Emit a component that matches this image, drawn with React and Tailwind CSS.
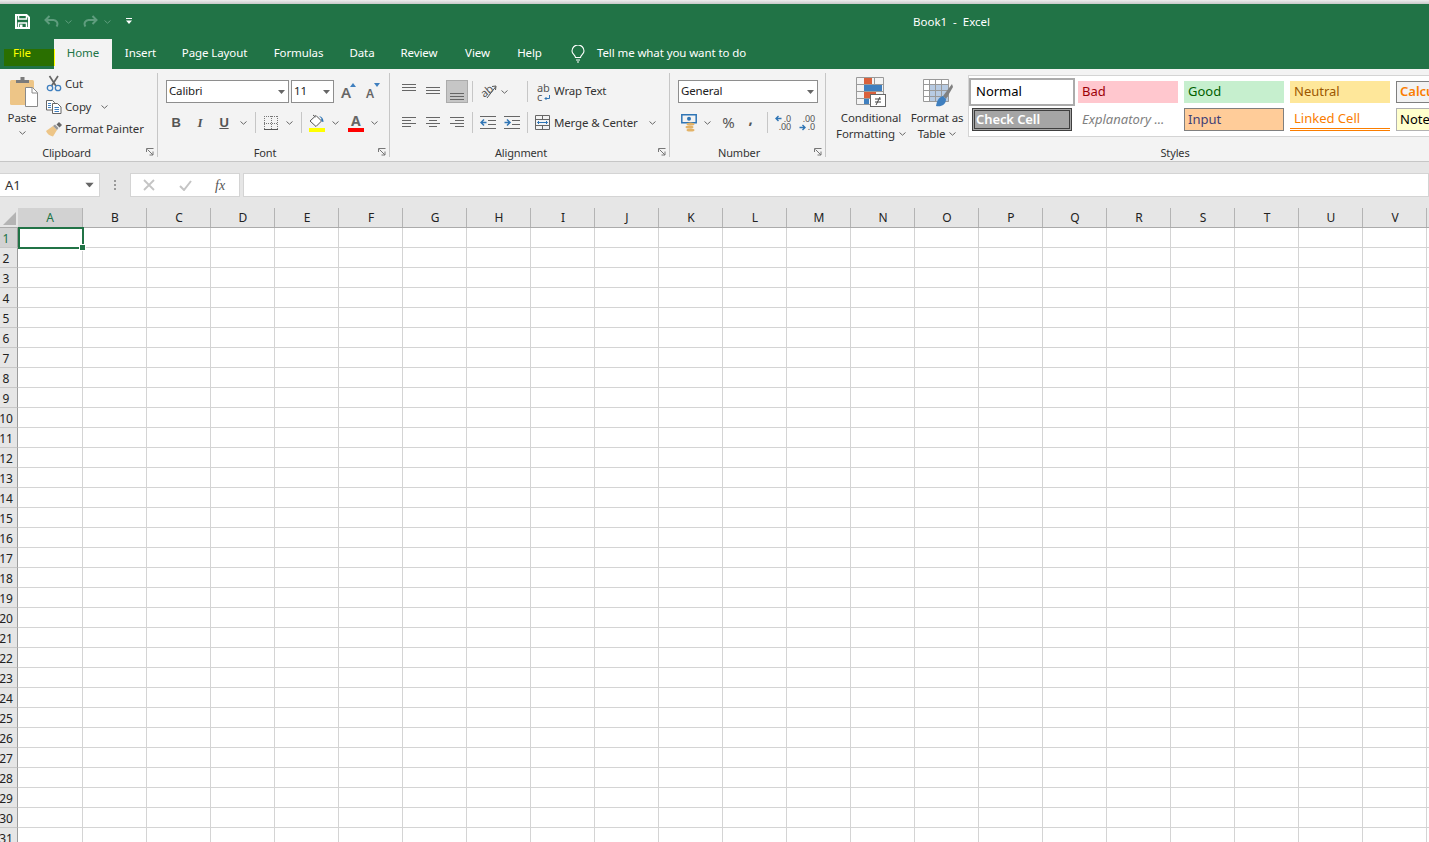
const COLS = "ABCDEFGHIJKLMNOPQRSTUVW".split("");
const ROWS = Array.from({ length: 31 }, (_, i) => i + 1);

const Chev = ({ c = "#666", className = "" }) => (
  <svg width="7" height="4" viewBox="0 0 7 4" className={"shrink-0 " + className}><path d="M.5.5 3.5 3.2 6.5.5" fill="none" stroke={c} /></svg>
);
const Tri = ({ className = "" }) => (
  <svg width="7" height="4" viewBox="0 0 7 4" className={"shrink-0 " + className}><path d="M0 0h7L3.5 4z" fill="#666" /></svg>
);
const Sep = ({ className = "" }) => <div className={"w-px h-[21px] bg-[#c6c6c6] shrink-0 " + className} />;
const GroupSep = () => <div className="w-px h-[84px] mt-[4px] bg-[#c6c6c6] shrink-0" />;
const Launcher = () => (
  <svg width="8" height="8" viewBox="0 0 8 8" className="shrink-0 mr-[3px] mt-[3px]">
    <path d="M.5 4V.5H7.5M1.5 1.5 7 7M7 3.5V7H3.5" fill="none" stroke="#777" />
  </svg>
);
const Lines = ({ rows, color = "#666", className = "" }) => (
  <svg width="14" height="11" viewBox="0 0 14 11" className={"shrink-0 " + className}>
    {rows.map(([a, b, y], i) => <path key={i} d={`M${a} ${y}.5H${b}`} stroke={color} />)}
  </svg>
);
const Combo = ({ w, text, className = "", tri = "mr-[3px]" }) => (
  <div className={"h-[23px] bg-white border border-[#8e8e8e] flex items-center justify-between pl-[2px] shrink-0 text-[11.5px] text-[#222] " + w + " " + className}>
    <span className="-mt-[1px]">{text}</span>
    <Tri className={tri} />
  </div>
);
const Group = ({ w, label, pad, launcher = true, children }) => (
  <div className={"flex flex-col shrink-0 " + w}>
    <div className="h-[76px]">{children}</div>
    <div className="h-[16px] flex">
      <div className={"flex-1 text-center text-[11px] leading-[16px] text-[#333] " + pad}>{label}</div>
      {launcher && <Launcher />}
    </div>
  </div>
);

const Save = () => (
  <svg width="15" height="15" viewBox="0 0 15 15" className="shrink-0">
    <path d="M1 1h10.500L14 3.500V14H1z" fill="none" stroke="#fff" strokeWidth="2" />
    <path d="M3.500 1.500v3.500h8V1.500" fill="none" stroke="#fff" strokeWidth="1.500" />
    <path d="M3.500 14V9h8v5" fill="none" stroke="#fff" strokeWidth="1.500" />
    <rect x="5" y="10.500" width="2.500" height="3" fill="#fff" />
  </svg>
);
const Undo = ({ flip }) => (
  <svg width="15" height="13" viewBox="0 0 15 13" className={"shrink-0 " + (flip ? "-scale-x-100" : "")}>
    <path d="M5.500 1 1.500 5l4 4M1.500 5H9a4 4 0 0 1 3.500 6.500" fill="none" stroke="#5f9d7e" strokeWidth="2" />
  </svg>
);
const Bulb = () => (
  <svg width="14" height="18" viewBox="0 0 14 18" className="shrink-0">
    <path d="M4.500 12.500C4.500 10 1 9 1 6a6 6 0 0 1 12 0c0 3-3.500 4-3.500 6.500z M5 15h4M6 17h2" fill="none" stroke="#fff" strokeWidth="1.100" />
  </svg>
);
const PasteIcon = () => (
  <svg width="28" height="30" viewBox="0 0 28 30">
    <rect x="0" y="3" width="24" height="25" rx="1.500" fill="#edc587" />
    <path d="M6 5V3h4.500V0h4v3H19v3H6z" fill="#7b7b7b" />
    <path d="M15.500 10.500h7l5 5v14h-12z" fill="#fff" stroke="#8a8a8a" />
    <path d="M22 10.500v5.500h5.500" fill="none" stroke="#8a8a8a" />
  </svg>
);
const Scissors = () => (
  <svg width="16" height="17" viewBox="0 0 16 17">
    <path d="M3.500 1 10 11M12 1 5.500 11" stroke="#666" strokeWidth="1.700" fill="none" />
    <circle cx="4" cy="13" r="2.700" fill="none" stroke="#3f7fbf" strokeWidth="1.300" />
    <circle cx="12" cy="13" r="2.700" fill="none" stroke="#3f7fbf" strokeWidth="1.300" />
  </svg>
);
const CopyIcon = () => (
  <svg width="16" height="14" viewBox="0 0 16 14">
    <path d="M.5.500h6l2 2V10H.500z" fill="#fff" stroke="#666" />
    <path d="M6.500 3.500h5l3.500 3.500v6.500H6.500z" fill="#fff" stroke="#666" />
    <path d="M2 3.500h3M2 5.500h3M2 7.500h3" stroke="#3f7fbf" />
    <path d="M8.500 7.500h4.500M8.500 9.500h4.500M8.500 11.500h4.500" stroke="#3f7fbf" />
  </svg>
);
const Painter = () => (
  <svg width="16" height="15" viewBox="0 0 16 15">
    <path d="M0 9 7 4l4 4-4 6.500C4 14 1 12 0 9z" fill="#edc587" />
    <path d="M7 4l2-1.500 3.500 3.500L11 8z" fill="#999" />
    <path d="M10.500 2.500 13 0l3 3-2.500 2.500z" fill="#666" />
  </svg>
);
const GrowA = ({ up }) => (
  <div className="relative w-[15px] h-[17px] shrink-0">
    <span className={"absolute left-0 bottom-0 leading-none font-semibold text-[#666] " + (up ? "text-[15px]" : "text-[12px] left-[1px]")}>A</span>
    <svg width="6" height="4" viewBox="0 0 6 4" className="absolute right-0 top-0">
      {up ? <path d="M3 0l3 4H0z" fill="#3f7fbf" /> : <path d="M0 0h6L3 4z" fill="#3f7fbf" />}
    </svg>
  </div>
);
const Borders = () => (
  <svg width="14" height="14" viewBox="0 0 14 14" className="shrink-0">
    <path d="M0 .5h14M0 7.500h14M.5 0v14M7.500 0v14M13.500 0v14" fill="none" stroke="#777" strokeDasharray="1 1" />
    <path d="M0 13.500h14" stroke="#555" />
  </svg>
);
const Fill = () => (
  <svg width="16" height="18" viewBox="0 0 16 18" className="shrink-0">
    <path d="M1 7 7 1.500 12.500 7 7 12.500z" fill="#fff" stroke="#555" />
    <path d="M4 1 6.500 3" stroke="#555" />
    <path d="M10 2c3 .5 4.500 3 4.500 6-1.500 0-3-2-2-3.500z" fill="#2f75b5" />
    <rect x="0" y="14" width="16" height="4" fill="#ffff00" />
  </svg>
);
const FontColor = () => (
  <div className="relative w-[16px] h-[18px] shrink-0">
    <span className="absolute left-[3px] top-0 text-[14px] leading-none font-bold text-[#666]">A</span>
    <div className="absolute left-0 bottom-0 w-[16px] h-[4px] bg-[#ff0000]" />
  </div>
);
const Orient = () => (
  <div className="relative w-[17px] h-[15px] shrink-0">
    <span className="absolute left-0 top-[1px] text-[11px] leading-none text-[#555] -rotate-[40deg]">ab</span>
    <svg width="17" height="15" viewBox="0 0 17 15" className="absolute left-0 top-0">
      <path d="M7 14 15.500 3M12 2.500l4-.500-.5 4" fill="none" stroke="#555" />
    </svg>
  </div>
);
const Indent = ({ out }) => (
  <svg width="16" height="13" viewBox="0 0 16 13" className="shrink-0">
    <path d="M0 .5h16M8 4.500h8M8 8.500h8M0 12.500h16" stroke="#666" />
    {out
      ? <path d="M6.500 6.500H1M4 3.500l-3 3 3 3" fill="none" stroke="#2f75b5" strokeWidth="1.500" />
      : <path d="M.5 6.500H6M3 3.500l3 3-3 3" fill="none" stroke="#2f75b5" strokeWidth="1.500" />}
  </svg>
);
const WrapIcon = () => (
  <div className="relative w-[13px] h-[18px] shrink-0 text-[#555] text-[11px] leading-[9px]">
    <span className="absolute left-0 top-0">ab</span>
    <span className="absolute left-0 bottom-0">c</span>
    <svg width="6" height="6" viewBox="0 0 6 6" className="absolute right-0 bottom-0"><path d="M5.500 0v3.500H1M2.500 2 1 3.500 2.500 5" fill="none" stroke="#2f75b5" /></svg>
  </div>
);
const MergeIcon = () => (
  <svg width="15" height="15" viewBox="0 0 15 15" className="shrink-0">
    <path d="M.5.5h14v14H.5zM.5 4.500h14M.5 10.500h14M7.500.5v4M7.500 10.500v4" fill="none" stroke="#666" />
    <path d="M2.500 7.500h10M4 6 2.500 7.500 4 9M11 6l1.500 1.500L11 9" fill="none" stroke="#2f75b5" />
  </svg>
);
const Accounting = () => (
  <svg width="16" height="18" viewBox="0 0 16 18" className="shrink-0">
    <path d="M.8.800h14.400v8H.8z" fill="none" stroke="#2f75b5" strokeWidth="1.500" />
    <circle cx="8" cy="4.800" r="2" fill="#2f75b5" />
    <ellipse cx="9.500" cy="10" rx="4" ry="1.600" fill="#e3b368" />
    <ellipse cx="8.500" cy="13" rx="4" ry="1.600" fill="#e3b368" />
    <ellipse cx="9.500" cy="16" rx="4" ry="1.600" fill="#e3b368" />
  </svg>
);
const Decimal = ({ inc }) => (
  <div className="relative w-[16px] h-[16px] shrink-0 text-[#555] text-[9px] leading-[8px]">
    {inc ? (
      <>
        <svg width="7" height="7" viewBox="0 0 7 7" className="absolute left-0 top-0"><path d="M6.500 3.500H1M3.500 1 1 3.500 3.500 6" fill="none" stroke="#2f75b5" strokeWidth="1.400" /></svg>
        <span className="absolute right-0 top-0">.0</span>
        <span className="absolute right-0 bottom-0">.00</span>
      </>
    ) : (
      <>
        <span className="absolute right-0 top-0">.00</span>
        <svg width="7" height="7" viewBox="0 0 7 7" className="absolute left-0 bottom-0"><path d="M.5 3.500H6M3.500 1 6 3.500 3.500 6" fill="none" stroke="#2f75b5" strokeWidth="1.400" /></svg>
        <span className="absolute right-0 bottom-0">.0</span>
      </>
    )}
  </div>
);
const CondIcon = () => (
  <svg width="30" height="30" viewBox="0 0 30 30">
    <path d="M.5.5h27v27H.5zM9.500.5v27M18.500.5v27M.5 7.500h27M.5 14.500h27M.5 21.500h27" fill="none" stroke="#999" />
    <rect x="8" y="1" width="8" height="6" fill="#d9603b" />
    <rect x="8" y="8" width="18" height="6" fill="#3f7fbf" />
    <rect x="8" y="15" width="12" height="6" fill="#d9603b" />
    <rect x="8" y="22" width="5" height="5" fill="#3f7fbf" />
    <rect x="14.500" y="17.500" width="15" height="12" fill="#fff" stroke="#666" />
    <path d="M19 22h6M19 25h6M24 20l-4 8" stroke="#444" fill="none" />
  </svg>
);
const TableIcon = () => (
  <svg width="30" height="29" viewBox="0 0 30 29">
    <rect x="1" y="1" width="25" height="22" fill="#fff" />
    <rect x="6" y="6" width="20" height="17" fill="#b7cbe3" />
    <path d="M.5.5h25v22H.5zM6.500.5v22M12.500.5v22M18.500.5v22M.5 5.500h25M.5 11.500h25M.5 17.500h25" fill="none" stroke="#999" />
    <path d="M29 5 20 17l3 3 7-12z" fill="#808080" />
    <path d="M20 17c-4 1-6 4-7 10 5 1 10-1 10-7z" fill="#3f7fbf" />
  </svg>
);

const STYLES = [
  ["Normal", "text-black bg-white outline-2 outline-[#ababab] outline-offset-1 pl-[4px] pb-[1px]"],
  ["Bad", "bg-[#ffc7ce] text-[#9c0006] pl-[4px] pb-[1px]"],
  ["Good", "bg-[#c6efce] text-[#006100] pl-[4px] pb-[1px]"],
  ["Neutral", "bg-[#fee79a] text-[#9c5700] pl-[4px] pb-[1px]"],
  ["Calculation", "bg-[#f2f2f2] text-[#fa7d00] font-semibold border border-[#7f7f7f] pl-[3px] pb-[1px]"],
  ["Check Cell", "bg-[#a5a5a5] text-white font-semibold border-[3px] border-double border-[#3f3f3f] pl-[1px] tracking-[-0.1px]"],
  ["Explanatory ...", "italic text-[#7f7f7f] pl-[4px]"],
  ["Input", "bg-[#ffcc99] text-[#3f3f76] border border-[#7f7f7f] pl-[3px]"],
  ["Linked Cell", "text-[#fa7d00] border-b-[3px] border-double border-[#fa7d00] pl-[4px] pt-[1px]"],
  ["Note", "bg-[#ffffcc] text-black border border-[#b2b2b2] pl-[3px]"],
];

const TABS = [
  ["Home", "w-[58px]"], ["Insert", "w-[57px]"], ["Page Layout", "w-[91px]"], ["Formulas", "w-[77px]"],
  ["Data", "w-[50px]"], ["Review", "w-[64px]"], ["View", "w-[53px]"], ["Help", "w-[51px]"],
];

export default function App() {
  return (
    <div className="w-[1429px] h-[842px] overflow-hidden bg-white font-['Noto_Sans',sans-serif] text-[12px]">
      <div className="h-[4px] bg-linear-to-b from-[#eeeeee] to-[#c8c8c8]" />
      {/* Title bar */}
      <div className="h-[35px] bg-[#217346] flex items-center relative text-white">
        <div className="ml-[15px]"><Save /></div>
        <div className="ml-[14px] flex items-center"><Undo /><Chev c="#5f9d7e" className="ml-[6px]" /></div>
        <div className="ml-[11px] flex items-center"><Undo flip /><Chev c="#5f9d7e" className="ml-[6px]" /></div>
        <svg width="7" height="7" viewBox="0 0 7 7" className="ml-[15px]"><path d="M0 0h6v1H0zM0 2.500h6L3 6z" fill="#fff" /></svg>
        <div className="absolute left-[913px] top-[10px] text-[11.5px] leading-[16px] whitespace-pre">Book1  -  Excel</div>
      </div>
      {/* Tabs */}
      <div className="h-[30px] bg-[#217346] flex text-white text-[11.5px] tracking-[-0.1px]">
        <div className="w-[54px] relative">
          <div className="absolute left-[4px] top-[10px] w-[51px] h-[17px] bg-[#2a6f00] border-r border-[#ffff00]" />
          <div className="absolute left-[13px] top-[5px] text-[#ffff00] leading-[18px]">File</div>
        </div>
        {TABS.map(([t, w], i) => (
          <div key={t} className={"h-full flex items-center justify-center pb-[2px] " + w + (i === 0 ? " bg-[#f3f3f3] text-[#217346]" : "")}>{t}</div>
        ))}
        <div className="ml-[16px] flex items-center"><Bulb /></div>
        <div className="ml-[12px] flex items-center pb-[2px]">Tell me what you want to do</div>
      </div>

      {/* Ribbon */}
      <div className="h-[93px] bg-[#f3f3f3] border-b border-[#c6c6c6] flex text-[#333] text-[11.5px] tracking-[-0.15px]">
        <Group w="w-[157px]" label="Clipboard" pad="pr-[13px]">
          <div className="flex">
            <div className="w-[44px] flex flex-col items-center">
              <div className="mt-[8px] ml-[4px]"><PasteIcon /></div>
              <div className="mt-[3px] leading-[16px]">Paste</div>
              <Chev className="mt-[5px]" />
            </div>
            <div className="ml-[2px] pt-[3px] flex flex-col">
              <div className="h-[23px] flex items-center"><div className="w-[16px]"><Scissors /></div><span className="ml-[3px]">Cut</span></div>
              <div className="h-[23px] flex items-center"><div className="w-[16px]"><CopyIcon /></div><span className="ml-[3px]">Copy</span><Chev className="ml-[10px]" /></div>
              <div className="h-[22px] flex items-center"><div className="w-[16px]"><Painter /></div><span className="ml-[3px] whitespace-nowrap">Format Painter</span></div>
            </div>
          </div>
        </Group>
        <GroupSep />
        <Group w="w-[231px]" label="Font" pad="pr-[6px]">
          <div className="pt-[11px] flex flex-col gap-[8px]">
            <div className="flex items-center">
              <Combo w="w-[123px]" text="Calibri" className="ml-[8px]" />
              <Combo w="w-[43px]" text="11" className="ml-[2px]" />
              <div className="ml-[7px]"><GrowA up /></div>
              <div className="ml-[9px]"><GrowA /></div>
            </div>
            <div className="flex items-center h-[23px]">
              <div className="ml-[13px] w-[10px] text-center font-bold text-[13px] text-[#555] font-['Liberation_Sans',sans-serif]">B</div>
              <div className="ml-[14px] w-[10px] text-center italic font-bold text-[13px] text-[#555] font-['Liberation_Serif',serif]">I</div>
              <div className="ml-[14px] w-[10px] text-center font-bold text-[13px] underline text-[#555] font-['Liberation_Sans',sans-serif]">U</div>
              <Chev className="ml-[11px]" />
              <Sep className="ml-[8px]" />
              <div className="ml-[8px]"><Borders /></div>
              <Chev className="ml-[8px]" />
              <Sep className="ml-[8px]" />
              <div className="ml-[7px]"><Fill /></div>
              <Chev className="ml-[7px]" />
              <div className="ml-[9px]"><FontColor /></div>
              <Chev className="ml-[7px]" />
            </div>
          </div>
        </Group>
        <GroupSep />
        <Group w="w-[279px]" label="Alignment" pad="pr-[6px]">
          <div className="pt-[11px] flex flex-col gap-[8px]">
            <div className="flex items-center h-[23px]">
              <Lines className="ml-[12px] -mt-[7px]" rows={[[0,14,1],[0,14,4],[0,14,7]]} />
              <Lines className="ml-[10px] -mt-[1px]" rows={[[0,14,1],[0,14,4],[0,14,7]]} />
              <div className="ml-[6px] w-[22px] h-[23px] bg-[#c6c6c6] border border-[#ababab] flex justify-center items-end pb-[1px] shrink-0">
                <Lines rows={[[0,14,3],[0,14,6],[0,14,9]]} />
              </div>
              <Sep className="ml-[4px]" />
              <div className="ml-[7px]"><Orient /></div>
              <Chev className="ml-[4px]" />
              <Sep className="ml-[19px]" />
              <div className="ml-[9px]"><WrapIcon /></div>
              <span className="ml-[4px] -mt-[1px] whitespace-nowrap">Wrap Text</span>
            </div>
            <div className="flex items-center h-[23px]">
              <Lines className="ml-[12px]" rows={[[0,14,0],[0,9,3],[0,14,6],[0,9,9]]} />
              <Lines className="ml-[10px]" rows={[[0,14,0],[3,11,3],[0,14,6],[3,11,9]]} />
              <Lines className="ml-[10px]" rows={[[0,14,0],[5,14,3],[0,14,6],[5,14,9]]} />
              <Sep className="ml-[8px]" />
              <div className="ml-[7px]"><Indent out /></div>
              <div className="ml-[8px]"><Indent /></div>
              <Sep className="ml-[7px]" />
              <div className="ml-[7px]"><MergeIcon /></div>
              <span className="ml-[4px] w-[95px] shrink-0 whitespace-nowrap">Merge &amp; Center</span>
              <Chev />
            </div>
          </div>
        </Group>
        <GroupSep />
        <Group w="w-[155px]" label="Number" pad="pr-[6px]">
          <div className="pt-[11px] flex flex-col gap-[8px]">
            <Combo w="w-[140px]" text="General" className="ml-[8px]" />
            <div className="flex items-center h-[23px]">
              <div className="ml-[11px]"><Accounting /></div>
              <Chev className="ml-[7px]" />
              <div className="ml-[11px] w-[13px] text-[15px] leading-none flex justify-center text-[#555]">%</div>
              <div className="ml-[13px] w-[5px] text-[15px] leading-none font-bold flex justify-center text-[#555] -mt-[9px]">,</div>
              <Sep className="ml-[14px]" />
              <div className="ml-[7px]"><Decimal inc /></div>
              <div className="ml-[8px]"><Decimal /></div>
            </div>
          </div>
        </Group>
        <GroupSep />
        <Group w="w-[698px]" label="Styles" pad="" launcher={false}>
          <div className="flex">
            <div className="ml-[8px] w-[74px] flex flex-col items-center leading-[16px] pt-[8px]">
              <CondIcon />
              <div className="mt-[3px]">Conditional</div>
              <div className="flex items-center whitespace-nowrap">Formatting<Chev className="ml-[4px]" /></div>
            </div>
            <div className="w-[58px] flex flex-col items-center leading-[16px] pt-[10px]">
              <div className="ml-[2px]"><TableIcon /></div>
              <div className="mt-[2px] whitespace-nowrap">Format as</div>
              <div className="flex items-center">Table<Chev className="ml-[4px]" /></div>
            </div>
            <div className="ml-[2px] mt-[6px] h-[62px] flex-1 bg-white border border-[#d4d4d4] pl-[3px] pt-[5px] grid grid-cols-[repeat(5,100px)] grid-rows-[22px_23px] gap-x-[6px] gap-y-[5px] text-[13px] tracking-normal">
              {STYLES.map(([t, c]) => (
                <div key={t} className={"flex items-center leading-none whitespace-nowrap overflow-hidden " + c}>{t}</div>
              ))}
            </div>
          </div>
        </Group>
      </div>

      {/* Formula bar */}
      <div className="h-[46px] bg-[#e6e6e6] pt-[11px] flex">
        <div className="w-[100px] h-[24px] bg-white border border-l-0 border-[#d4d4d4] flex items-center justify-between pl-[5px] pr-[6px] text-[13px] text-[#333]">
          <span className="mt-[1px]">A1</span><Tri className="scale-125" />
        </div>
        <div className="w-[30px] flex flex-col items-center justify-center gap-[2px] h-[24px]">
          <span className="w-[2px] h-[2px] bg-[#999]" /><span className="w-[2px] h-[2px] bg-[#999]" /><span className="w-[2px] h-[2px] bg-[#999]" />
        </div>
        <div className="w-[110px] h-[24px] bg-white border border-[#d4d4d4] flex items-center">
          <svg width="12" height="12" viewBox="0 0 12 12" className="ml-[12px]"><path d="M1 1l10 10M11 1 1 11" stroke="#c4c4c4" strokeWidth="1.800" /></svg>
          <svg width="13" height="11" viewBox="0 0 13 11" className="ml-[24px]"><path d="M1 6l4 4 7-9" fill="none" stroke="#c4c4c4" strokeWidth="2" /></svg>
          <span className="ml-[23px] italic text-[14px] text-[#555] font-['Liberation_Serif',serif]">fx</span>
        </div>
        <div className="ml-[3px] flex-1 h-[24px] bg-white border border-[#d4d4d4]" />
      </div>

      {/* Sheet */}
      <div className="relative">
        <div className="flex h-[20px] bg-[#e6e6e6] border-b border-[#ababab] text-[12px] text-[#222]">
          <div className="w-[18px] shrink-0 relative">
            <svg width="13" height="13" viewBox="0 0 13 13" className="absolute left-[3px] top-[4px]"><path d="M13 0v13H0z" fill="#b4b4b4" /></svg>
          </div>
          {COLS.map((c, i) => (
            <div key={c} className={"shrink-0 flex items-center justify-center border-r border-[#b4b4b4] leading-none " + (i === 0 ? "w-[65px] bg-[#d2d2d2] text-[#217346]" : "w-[64px] pl-[1px]")}>{c}</div>
          ))}
        </div>
        {ROWS.map((r) => (
          <div key={r} className="flex h-[20px]">
            <div className={"w-[18px] shrink-0 border-r border-b border-r-[#9c9c9c] border-b-[#c8c8c8] flex items-center justify-center pr-[5px] pt-[3px] overflow-hidden text-[12px] leading-none " + (r === 1 ? "bg-[#d2d2d2] text-[#217346]" : "bg-[#e6e6e6] text-[#222]")}>
              {r}
            </div>
            {COLS.map((c, i) => (
              <div key={c} className={"shrink-0 border-r border-b border-[#d4d4d4] " + (i === 0 ? "w-[65px]" : "w-[64px]")} />
            ))}
          </div>
        ))}
        <div className="absolute left-[18px] top-[19px] w-[66px] h-[22px] border-2 border-[#217346]" />
        <div className="absolute left-[80px] top-[37px] w-[5px] h-[5px] bg-[#217346] outline outline-1 outline-white" />
      </div>
    </div>
  );
}
